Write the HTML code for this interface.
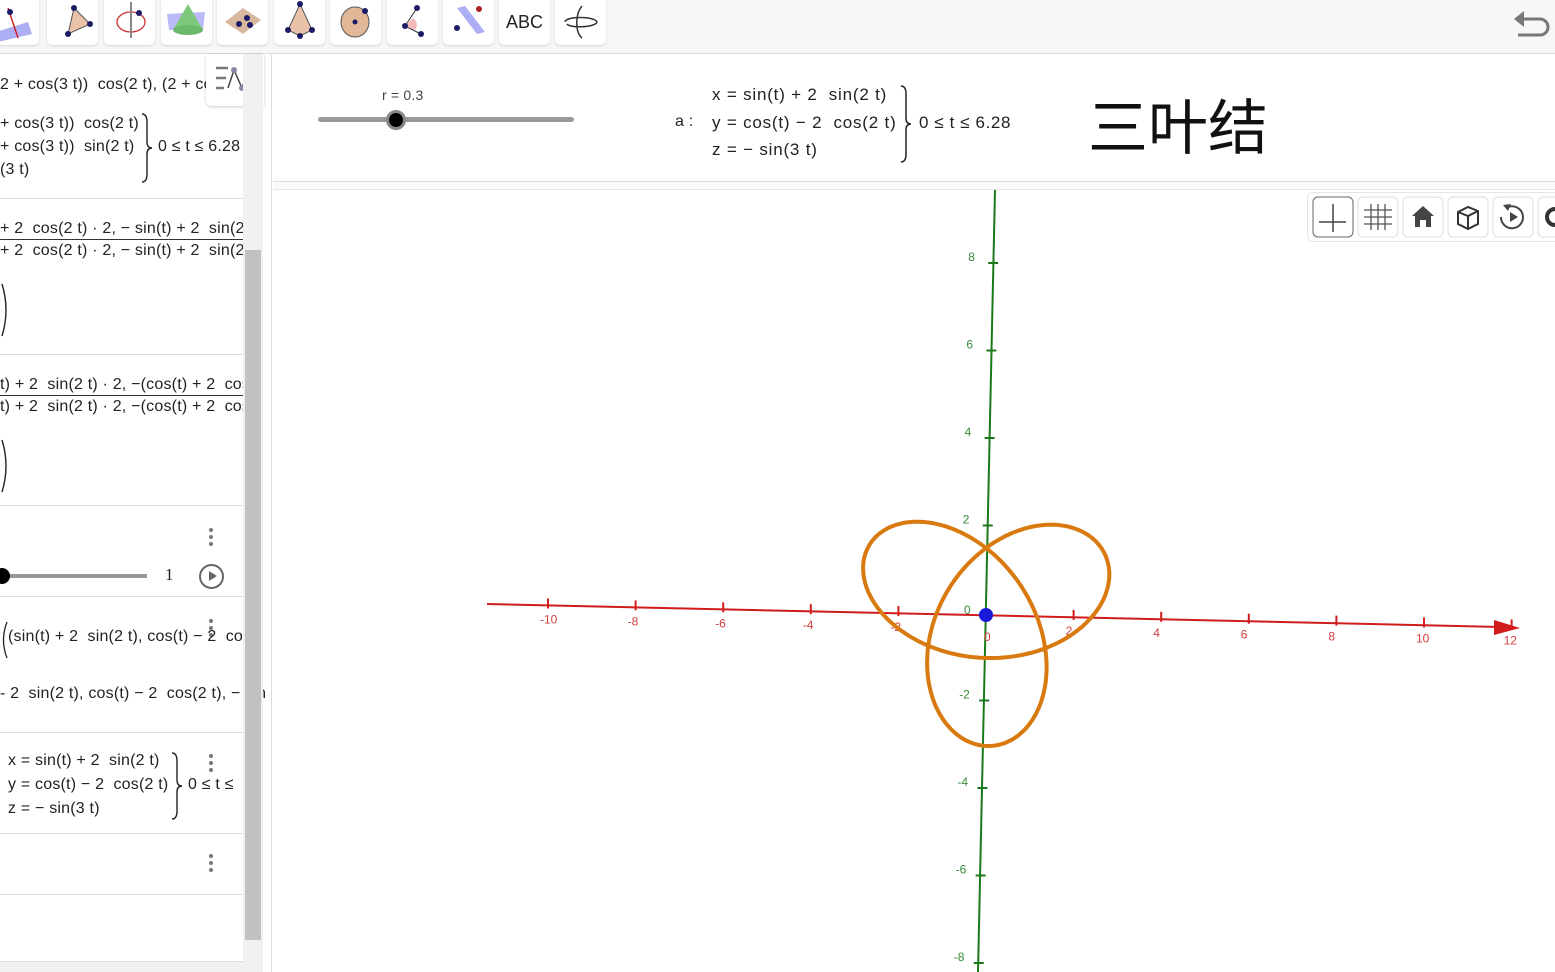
<!DOCTYPE html>
<html><head><meta charset="utf-8">
<style>
*{margin:0;padding:0;box-sizing:border-box}
body{width:1555px;height:972px;overflow:hidden;background:#fff;font-family:"Liberation Sans","Noto Sans CJK SC",sans-serif;position:relative;color:#222}
.tb{position:absolute;left:0;top:0;width:1555px;height:54px;background:#f7f7f9;border-bottom:1px solid #ddd}
.btn{position:absolute;top:-6px;width:51px;height:51px;background:#fff;border-radius:5px;box-shadow:0 1px 2px rgba(0,0,0,.15)}
.left{position:absolute;left:0;top:54px;width:272px;height:918px;background:#fff;border-right:1px solid #ddd}
.row{position:absolute;left:0;width:243px;border-bottom:1px solid #ddd}
.t{position:absolute;white-space:nowrap;font-size:16px;color:#222;letter-spacing:.2px}
.br{position:absolute;font-family:"DejaVu Sans",sans-serif;font-weight:100;transform-origin:left top;color:#222}
.dots{position:absolute;width:4px}
.dots i{display:block;width:4px;height:4px;border-radius:2px;background:#777;margin-bottom:3px}
.sb{position:absolute;left:243px;top:54px;width:20px;height:918px;background:#f1f1f1}
</style></head><body>
<div class="tb">
 <div class="btn" style="left:-12px"><svg width="51" height="51"><polygon points="8,38 40,28 44,40 10,48" fill="#8c8cf0" opacity=".7"/><line x1="20" y1="14" x2="30" y2="44" stroke="#c22" stroke-width="1.5"/><circle cx="22" cy="18" r="3" fill="#1a1a66"/></svg></div>
 <div class="btn" style="left:47px"><svg width="51" height="51"><polygon points="27,14 43,30 21,40" fill="#e9c2a8" stroke="#555"/><circle cx="27" cy="14" r="3" fill="#1a1a66"/><circle cx="43" cy="30" r="3" fill="#1a1a66"/><circle cx="21" cy="40" r="3" fill="#1a1a66"/></svg></div>
 <div class="btn" style="left:104px"><svg width="51" height="51"><ellipse cx="27" cy="28" rx="14" ry="10" fill="none" stroke="#c33" stroke-width="1.3"/><line x1="27" y1="8" x2="27" y2="44" stroke="#888" stroke-width="2"/><circle cx="35" cy="19" r="3" fill="#1a1a66"/></svg></div>
 <div class="btn" style="left:161px"><svg width="51" height="51"><polygon points="6,20 44,18 42,36 8,36" fill="#8c8cf0" opacity=".6"/><polygon points="27,10 12,36 42,36" fill="#7ec87e"/><ellipse cx="27" cy="36" rx="15" ry="5" fill="#6ab86a"/></svg></div>
 <div class="btn" style="left:217px"><svg width="51" height="51"><polygon points="8,28 26,14 44,26 26,40" fill="#d9b8a0"/><circle cx="22" cy="30" r="3" fill="#1a1a66"/><circle cx="30" cy="24" r="3" fill="#1a1a66"/><circle cx="33" cy="31" r="3" fill="#1a1a66"/></svg></div>
 <div class="btn" style="left:274px"><svg width="51" height="51"><polygon points="26,10 14,36 26,42 38,36" fill="#e9c2a8" stroke="#555"/><circle cx="26" cy="10" r="3" fill="#1a1a66"/><circle cx="14" cy="36" r="3" fill="#1a1a66"/><circle cx="38" cy="36" r="3" fill="#1a1a66"/><circle cx="26" cy="42" r="3" fill="#1a1a66"/></svg></div>
 <div class="btn" style="left:330px"><svg width="51" height="51"><ellipse cx="25" cy="28" rx="14" ry="15" fill="#e0b898" stroke="#555"/><circle cx="25" cy="28" r="2.5" fill="#1a1a66"/><circle cx="35" cy="17" r="3" fill="#1a1a66"/></svg></div>
 <div class="btn" style="left:387px"><svg width="51" height="51"><polyline points="30,14 18,32 34,40" fill="none" stroke="#333"/><path d="M18,32 L26,24 A8 8 0 0 1 28,36Z" fill="#f4b8b8"/><circle cx="30" cy="14" r="3" fill="#1a1a66"/><circle cx="18" cy="32" r="3" fill="#1a1a66"/><circle cx="34" cy="40" r="3" fill="#1a1a66"/></svg></div>
 <div class="btn" style="left:443px"><svg width="51" height="51"><polygon points="14,14 22,12 42,38 34,40" fill="#8c8cf0" opacity=".7"/><circle cx="14" cy="34" r="3" fill="#1a1a66"/><circle cx="36" cy="15" r="3" fill="#a22"/></svg></div>
 <div class="btn" style="left:499px"><div style="position:absolute;left:7px;top:18px;font-size:18px">ABC</div></div>
 <div class="btn" style="left:555px"><svg width="51" height="51"><path d="M10,28 C10,22 40,22 42,28 C40,34 14,34 12,30" fill="none" stroke="#333" stroke-width="1.5"/><path d="M27,12 C20,20 20,38 27,44" fill="none" stroke="#333" stroke-width="1.5"/></svg></div>
 <svg style="position:absolute;left:1510px;top:5px" width="40" height="36"><path d="M10,14 H30 A8 8 0 0 1 30,30 H8" fill="none" stroke="#777" stroke-width="3"/><polygon points="4,14 14,6 14,22" fill="#777"/></svg>
</div>

<div class="left">
 <div class="t" style="left:0;top:22px">2 + cos(3 t))&nbsp; cos(2 t), (2 + cos</div>
 <div style="position:absolute;left:206px;top:0;width:58px;height:52px;background:#fff;box-shadow:0 1px 3px rgba(0,0,0,.2);border-radius:0 0 0 6px"><svg width="58" height="52"><g stroke="#777" stroke-width="2.5"><line x1="10" y1="14" x2="22" y2="14"/><line x1="10" y1="24" x2="20" y2="24"/><line x1="10" y1="34" x2="18" y2="34"/></g><polyline points="22,34 28,16 36,34 44,12" fill="none" stroke="#444" stroke-width="1.5"/><circle cx="28" cy="16" r="3" fill="#88a"/><circle cx="36" cy="34" r="3" fill="#88a"/></svg></div>
 <div class="t" style="left:0;top:61px">+ cos(3 t))&nbsp; cos(2 t)</div>
 <div class="t" style="left:0;top:84px">+ cos(3 t))&nbsp; sin(2 t)</div>
 <div class="t" style="left:0;top:107px">(3 t)</div>
 <svg style="position:absolute;left:140px;top:58px" width="14" height="72"><path d="M2,2 Q7,2 7,10 V30 Q7,36 12,36 Q7,36 7,42 V62 Q7,70 2,70" fill="none" stroke="#222" stroke-width="1.4"/></svg>
 <div class="t" style="left:158px;top:84px">0 ≤ t ≤ 6.28</div>
 <div class="row" style="top:0;height:145px"></div>
 <div class="t" style="left:0;top:166px">+ 2&nbsp; cos(2 t) · 2, − sin(t) + 2&nbsp; sin(2 t</div>
 <div style="position:absolute;left:0;top:185px;width:243px;border-top:1px solid #333"></div>
 <div class="t" style="left:0;top:188px">+ 2&nbsp; cos(2 t) · 2, − sin(t) + 2&nbsp; sin(2 t</div>
 <svg style="position:absolute;left:0;top:228px" width="14" height="56"><path d="M2,2 Q10,28 2,54" fill="none" stroke="#222" stroke-width="1.4"/></svg>
 <div class="row" style="top:145px;height:156px"></div>
 <div class="t" style="left:0;top:322px">t) + 2&nbsp; sin(2 t) · 2, −(cos(t) + 2&nbsp; cos(</div>
 <div style="position:absolute;left:0;top:341px;width:243px;border-top:1px solid #333"></div>
 <div class="t" style="left:0;top:344px">t) + 2&nbsp; sin(2 t) · 2, −(cos(t) + 2&nbsp; cos(</div>
 <svg style="position:absolute;left:0;top:384px" width="14" height="56"><path d="M2,2 Q10,28 2,54" fill="none" stroke="#222" stroke-width="1.4"/></svg>
 <div class="row" style="top:301px;height:151px"></div>
 <div class="dots" style="left:209px;top:474px"><i></i><i></i><i></i></div>
 <div style="position:absolute;left:0;top:520px;width:147px;height:4px;background:#999"></div>
 <div style="position:absolute;left:-6px;top:514px;width:16px;height:16px;border-radius:8px;background:#000"></div>
 <div class="t" style="left:165px;top:511px;font-family:'Liberation Serif',serif;font-size:17px">1</div>
 <div style="position:absolute;left:199px;top:510px;width:25px;height:25px;border:2px solid #666;border-radius:50%"><div style="position:absolute;left:8px;top:5px;border-left:8px solid #666;border-top:5.5px solid transparent;border-bottom:5.5px solid transparent"></div></div>
 <div class="row" style="top:452px;height:91px"></div>
 <div class="dots" style="left:209px;top:565px"><i></i><i></i><i></i></div>
 <svg style="position:absolute;left:0;top:566px" width="10" height="40"><path d="M7,2 Q0,20 7,38" fill="none" stroke="#222" stroke-width="1.3"/></svg>
 <div class="t" style="left:8px;top:574px">(sin(t) + 2&nbsp; sin(2 t), cos(t) − 2&nbsp; cos(</div>
 <div class="t" style="left:0;top:631px">- 2&nbsp; sin(2 t), cos(t) − 2&nbsp; cos(2 t), − sin</div>
 <div class="row" style="top:543px;height:136px"></div>
 <div class="dots" style="left:209px;top:700px"><i></i><i></i><i></i></div>
 <div class="t" style="left:8px;top:698px">x = sin(t) + 2&nbsp; sin(2 t)</div>
 <div class="t" style="left:8px;top:722px">y = cos(t) − 2&nbsp; cos(2 t)</div>
 <div class="t" style="left:8px;top:746px">z = − sin(3 t)</div>
 <svg style="position:absolute;left:170px;top:697px" width="14" height="70"><path d="M2,2 Q7,2 7,10 V29 Q7,35 12,35 Q7,35 7,41 V60 Q7,68 2,68" fill="none" stroke="#222" stroke-width="1.4"/></svg>
 <div class="t" style="left:188px;top:722px">0 ≤ t ≤</div>
 <div class="row" style="top:679px;height:101px"></div>
 <div class="dots" style="left:209px;top:800px"><i></i><i></i><i></i></div>
 <div class="row" style="top:780px;height:61px"></div>
 <div style="position:absolute;left:0;top:907px;width:243px;height:11px;background:#f0f0f0;border-top:1px solid #ddd"></div>
</div>
<div class="sb"><div style="position:absolute;left:2px;top:196px;width:16px;height:690px;background:#c1c1c1"></div></div>

<div style="position:absolute;left:273px;top:54px;width:1282px;height:128px;background:#fff;border-bottom:1px solid #ddd"></div>
<div style="position:absolute;left:273px;top:182px;width:1282px;height:8px;background:#fafafa;border-bottom:1px solid #e5e5e5"></div>
<div class="t" style="left:382px;top:87px;font-size:14px;color:#444">r = 0.3</div>
<div style="position:absolute;left:318px;top:117px;width:256px;height:5px;border-radius:3px;background:#999"></div>
<div style="position:absolute;left:386px;top:110px;width:20px;height:20px;border-radius:10px;background:#000;border:3px solid #888"></div>
<div class="t" style="left:675px;top:113px;font-size:16px">a :</div>
<div class="t" style="left:712px;top:85px;font-size:17px;letter-spacing:.8px">x = sin(t) + 2&nbsp; sin(2 t)</div>
<div class="t" style="left:712px;top:113px;font-size:17px;letter-spacing:.8px">y = cos(t) − 2&nbsp; cos(2 t)</div>
<div class="t" style="left:712px;top:140px;font-size:17px;letter-spacing:.8px">z = − sin(3 t)</div>
<svg style="position:absolute;left:899px;top:84px" width="14" height="80"><path d="M2,2 Q7,2 7,10 V34 Q7,40 12,40 Q7,40 7,46 V70 Q7,78 2,78" fill="none" stroke="#222" stroke-width="1.5"/></svg>
<div class="t" style="left:919px;top:113px;font-size:17px;letter-spacing:.6px">0 ≤ t ≤ 6.28</div>
<div class="t" style="left:1088px;top:80px;font-size:60px;color:#111;letter-spacing:0">三叶结</div>

<svg style="position:absolute;left:0;top:0" width="1555" height="972" id="g">
 <line x1="487" y1="604" x2="1500" y2="627" stroke="#d01c1c" stroke-width="2"/>
 <polygon points="1520,628 1494,620 1494,635" fill="#d01c1c"/>
 <line x1="995" y1="190" x2="978" y2="972" stroke="#1a7a1a" stroke-width="2"/>
 <g id="tk" font-family="Liberation Sans" font-size="12"></g>
 <path id="cv" fill="none" stroke="#d97a10" stroke-width="4"/>
 <circle cx="986" cy="615" r="7" fill="#1a1ad9"/>
</svg>
<div style="position:absolute;left:1307px;top:192px;width:260px;height:50px;background:#fff;border:1px solid #e5e5e5;border-radius:6px"></div>
<svg style="position:absolute;left:1312px;top:196px" width="243" height="42">
 <rect x="1" y="1" width="40" height="40" rx="5" fill="#fff" stroke="#666"/>
 <path d="M21,8 V36 M7,26 H34" stroke="#444" stroke-width="1.5"/>
 <rect x="46" y="1" width="40" height="40" rx="5" fill="#fff" stroke="#ddd"/>
 <path d="M59,8 V34 M66,8 V34 M73,8 V34 M52,14 H80 M52,21 H80 M52,28 H80" stroke="#555" stroke-width="1.3"/>
 <rect x="91" y="1" width="40" height="40" rx="5" fill="#fff" stroke="#ddd"/>
 <path d="M111,10 L122,20 H119 V31 H114 V24 H108 V31 H103 V20 H100Z" fill="#444"/>
 <rect x="136" y="1" width="40" height="40" rx="5" fill="#fff" stroke="#ddd"/>
 <path d="M146,16 L156,11 L166,15 V28 L156,33 L146,28Z M146,16 L156,20 L166,15 M156,20 V33" fill="none" stroke="#333" stroke-width="2"/>
 <rect x="181" y="1" width="40" height="40" rx="5" fill="#fff" stroke="#ddd"/>
 <path d="M196,11 A11 11 0 1 1 189,21" fill="none" stroke="#444" stroke-width="2"/><polygon points="191,9 199,8 196,15" fill="#444"/><polygon points="198,16 206,21 198,26" fill="#444"/>
 <rect x="226" y="1" width="40" height="40" rx="5" fill="#fff" stroke="#ddd"/>
 <circle cx="243" cy="21" r="8" fill="none" stroke="#333" stroke-width="4"/>
</svg>
<script>
var p="";for(var i=0;i<=400;i++){var t=i/400*2*Math.PI;var x=Math.sin(t)+2*Math.sin(2*t),y=Math.cos(t)-2*Math.cos(2*t);var X=986.5+x*45+y*(-0.3),Y=614-y*44+x*1;p+=(i?"L":"M")+X.toFixed(1)+","+Y.toFixed(1);}
document.getElementById("cv").setAttribute("d",p+"Z");
var tk="";for(var k=-10;k<=12;k+=2){if(!k)continue;var X=986+k*43.8,Y=613+k*0.95;tk+='<line x1="'+X+'" y1="'+(Y-5)+'" x2="'+X+'" y2="'+(Y+5)+'" stroke="#d01c1c" stroke-width="2"/><text x="'+(X-8)+'" y="'+(Y+20)+'" fill="#d04040">'+k+'</text>';}
for(var k=-8;k<=8;k+=2){if(!k)continue;var Y=613-k*43.75,X=986+k*0.9;tk+='<line x1="'+(X-5)+'" y1="'+Y+'" x2="'+(X+5)+'" y2="'+Y+'" stroke="#1a7a1a" stroke-width="2"/><text x="'+(X-25)+'" y="'+(Y-2)+'" fill="#3a8a3a">'+k+'</text>';}
tk+='<text x="964" y="614" fill="#3a8a3a">0</text><text x="984" y="641" fill="#d04040">0</text>';
document.getElementById("tk").innerHTML=tk;
</script>
</body></html>
